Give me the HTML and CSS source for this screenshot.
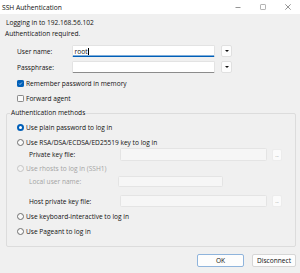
FILE: index.html
```html
<!DOCTYPE html>
<html>
<head>
<meta charset="utf-8">
<link rel="stylesheet" href="styles.css">
</head>
<body>
<div class="window">
  <div class="titlebar">
    <span class="title">SSH Authentication</span>
    <div class="controls">
      <svg class="ctl" width="8" height="8" viewBox="0 0 8 8"><path d="M1.5 4.5h5" stroke="#7a7a7a" stroke-width="0.8"/></svg>
      <svg class="ctl" width="8" height="8" viewBox="0 0 8 8"><rect x="1.5" y="1.5" width="5" height="5" rx="0.6" fill="none" stroke="#a0a0a0" stroke-width="0.8"/></svg>
      <svg class="ctl" width="8" height="8" viewBox="0 0 8 8"><path d="M1.3 1.3l5.4 5.4M6.7 1.3l-5.4 5.4" stroke="#7a7a7a" stroke-width="0.8"/></svg>
    </div>
  </div>
  <div class="content">
    <div class="line l1">Logging in to 192.168.56.102</div>
    <div class="line l2">Authentication required.</div>
    <div class="field f-user">
      <span class="flabel">User name:</span>
      <div class="input active"><span>root</span><span class="caret"></span></div>
      <div class="drop"><span class="tri"></span></div>
    </div>
    <div class="field f-pass">
      <span class="flabel">Passphrase:</span>
      <div class="input"></div>
      <div class="drop"><span class="tri"></span></div>
    </div>
    <div class="check c1"><span class="box on"><svg width="7" height="7" viewBox="0 0 7 7"><path d="M1.5 3.6l1.3 1.3 2.7-2.8" fill="none" stroke="#fff" stroke-width="0.9"/></svg></span>Remember password in memory</div>
    <div class="check c2"><span class="box"></span>Forward agent</div>
    <fieldset class="group">
      <legend>Authentication methods</legend>
      <div class="radio r1"><span class="dot on"></span>Use plain password to log in</div>
      <div class="radio r2"><span class="dot"></span>Use RSA/DSA/ECDSA/ED25519 key to log in</div>
      <div class="sub s1"><span class="slabel">Private key file:</span><div class="sinput wide"></div><div class="more">...</div></div>
      <div class="radio r3 disabled"><span class="dot dis"></span>Use rhosts to log in (SSH1)</div>
      <div class="sub s2"><span class="slabel disabled">Local user name:</span><div class="sinput short"></div></div>
      <div class="sub s3"><span class="slabel">Host private key file:</span><div class="sinput wide"></div><div class="more">...</div></div>
      <div class="radio r4"><span class="dot"></span>Use keyboard-interactive to log in</div>
      <div class="radio r5"><span class="dot"></span>Use Pageant to log in</div>
    </fieldset>
    <div class="buttons">
      <div class="btn ok">OK</div>
      <div class="btn disc">Disconnect</div>
    </div>
  </div>
</div>
</body>
</html>
```
FILE: styles.css
```css
* { box-sizing: border-box; }
html, body { margin: 0; padding: 0; }
body {
  width: 300px;
  height: 273px;
  background: #f0f0f0;
  font-family: "Open Sans", "Noto Sans", sans-serif;
  font-size: 6.6px;
  color: #111111;
  overflow: hidden;
}
.window { width: 300px; height: 273px; display: flex; flex-direction: column; }
.titlebar {
  height: 14px;
  background: #ffffff;
  display: flex;
  align-items: center;
  justify-content: space-between;
  padding-left: 2px;
}
.title { font-size: 6.7px; color: #111; }
.controls { display: flex; align-items: center; gap: 17px; padding-right: 8px; }
.ctl { display: block; }
.content { display: flex; flex-direction: column; padding: 0 4px 0 6px; }
.line { height: 10px; line-height: 10px; }
.l1 { margin-top: 4px; }
.l2 { margin-top: 1px; margin-left: -1px; }
.field { display: flex; align-items: center; height: 12px; }
.f-user { margin-top: 6px; }
.f-pass { margin-top: 4px; }
.flabel { width: 66px; padding-left: 11px; }
.input {
  width: 143px;
  height: 12px;
  background: #fff;
  border: 1px solid #e3e3e3;
  border-bottom-color: #8c8c8c;
  border-radius: 1.5px;
  display: flex;
  align-items: center;
  padding-left: 1.5px;
}
.input.active { border-bottom: 1px solid #005fb8; box-shadow: inset 0 -0.5px 0 #005fb8; }
.caret { width: 0.6px; height: 7px; background: #000; margin-left: 0.3px; }
.drop {
  margin-left: 6px;
  width: 11px;
  height: 12px;
  background: #fdfdfd;
  border: 1px solid #e0e0e0;
  border-radius: 2px;
  display: flex;
  align-items: center;
  justify-content: center;
}
.tri { width: 0; height: 0; border-left: 2.2px solid transparent; border-right: 2.2px solid transparent; border-top: 2.4px solid #111; }
.check { display: flex; align-items: center; height: 10px; padding-left: 11px; }
.c1 { margin-top: 5px; }
.c2 { margin-top: 5px; }
.box {
  width: 7px; height: 7px;
  border: 0.8px solid #8a8a8a;
  border-radius: 1.2px;
  background: #fafafa;
  margin-right: 2px;
  display: flex; align-items: center; justify-content: center;
}
.box.on { background: #005fb8; border-color: #005fb8; }
.box svg { display: block; }
.group {
  margin: 5px 0 0 0;
  width: 290px;
  border: 1px solid #dcdcdc;
  border-radius: 2px;
  padding: 0 0 10px 0;
  display: flex;
  flex-direction: column;
}
.group legend { padding: 0 1px; margin-left: 3px; height: 10px; line-height: 10px; }
.radio { display: flex; align-items: center; height: 10px; padding-left: 10px; }
.r1 { margin-top: 4px; }
.r2 { margin-top: 5px; }
.r3 { margin-top: 2px; }
.r4 { margin-top: 4px; }
.r5 { margin-top: 5px; }
.dot {
  width: 7px; height: 7px;
  border-radius: 50%;
  border: 0.8px solid #6e6e6e;
  background: #fafafa;
  margin-right: 2px;
}
.dot.on { border: 2px solid #005fb8; background: #fff; }
.dot.dis { border-color: #c4c4c4; background: #f3f3f3; }
.disabled { color: #a3a3a3; }
.sub { display: flex; align-items: center; padding-left: 22px; }
.s1 { margin-top: 1px; height: 13px; }
.s2 { margin-top: 3px; height: 11px; }
.s3 { margin-top: 8px; height: 12px; }
.slabel { width: 91px; }
.sinput {
  height: 100%;
  background: #f6f6f6;
  border: 1px solid #e4e4e4;
  border-radius: 1.5px;
}
.sinput.wide { width: 147px; }
.sinput.short { width: 105px; margin-left: -2px; }
.more {
  margin-left: 5px;
  width: 10px;
  height: 12px;
  background: #fbfbfb;
  border: 1px solid #ececec;
  border-radius: 2px;
  font-size: 4.5px;
  color: #8a8a8a;
  display: flex; align-items: center; justify-content: center;
}
.buttons { display: flex; justify-content: flex-end; gap: 8px; margin-top: 7px; padding-right: 0; }
.btn {
  height: 13px;
  background: #fdfdfd;
  border: 1px solid #d6d6d6;
  border-radius: 2px;
  display: flex; align-items: center; justify-content: center;
}
.ok { width: 47px; border-color: #8fb4dc; }
.disc { width: 44px; }
```
